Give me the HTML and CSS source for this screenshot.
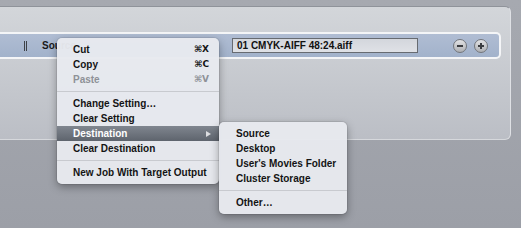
FILE: index.html
```html
<!DOCTYPE html>
<html>
<head>
<meta charset="utf-8">
<link rel="stylesheet" href="styles.css">
</head>
<body>
<div class="screen">
  <div class="panel">
    <div class="row">
      <span class="grip"></span>
      <span class="label">Source</span>
      <span class="field">01 CMYK-AIFF 48:24.aiff</span>
      <span class="btns">
        <span class="circ minus"></span>
        <span class="circ plus"></span>
      </span>
    </div>
  </div>

  <div class="menu main-menu">
    <div class="item"><span>Cut</span><span class="key">⌘X</span></div>
    <div class="item"><span>Copy</span><span class="key">⌘C</span></div>
    <div class="item disabled"><span>Paste</span><span class="key">⌘V</span></div>
    <div class="sep"></div>
    <div class="item"><span>Change Setting…</span></div>
    <div class="item"><span>Clear Setting</span></div>
    <div class="item hl"><span>Destination</span><span class="arrow"></span></div>
    <div class="item"><span>Clear Destination</span></div>
    <div class="sep"></div>
    <div class="item"><span>New Job With Target Output</span></div>
  </div>

  <div class="menu sub-menu">
    <div class="item"><span>Source</span></div>
    <div class="item"><span>Desktop</span></div>
    <div class="item"><span>User's Movies Folder</span></div>
    <div class="item"><span>Cluster Storage</span></div>
    <div class="sep"></div>
    <div class="item"><span>Other…</span></div>
  </div>
</div>
</body>
</html>
```

FILE: styles.css
```css
html, body {
  margin: 0;
  padding: 0;
}

body {
  width: 521px;
  height: 228px;
  overflow: hidden;
  background: linear-gradient(#a6a9b0, #9c9fa7);
  font-family: "Liberation Sans", Arial, "DejaVu Sans", sans-serif;
  font-weight: bold;
  font-size: 10px;
  color: #141414;
}

.screen {
  position: relative;
  width: 521px;
  height: 228px;
  padding-top: 6px;
  box-sizing: border-box;
}

.panel {
  width: 511px;
  height: 134px;
  box-sizing: border-box;
  border-top: 1px solid #8f939a;
  border-right: 1px solid #dfe1e5;
  border-bottom: 1px solid #d6d8dc;
  border-radius: 0 6px 6px 0;
  background: linear-gradient(#d3d6da, #bbbec5);
  padding-top: 25px;
}

.row {
  display: flex;
  align-items: center;
  margin-right: 9px;
  height: 23px;
  border: 2px solid #f4f5f7;
  border-left: none;
  border-radius: 0 5px 5px 0;
  background: linear-gradient(#b0bdd3, #a2b2cb);
  padding-left: 24px;
}

.grip {
  width: 1px;
  height: 10px;
  border-left: 1px solid #3e4247;
  border-right: 1px solid #3e4247;
}

.label {
  margin-left: 15px;
  width: 190px;
  color: #1a1a1a;
}

.field {
  width: 180px;
  height: 13px;
  line-height: 13px;
  border: 1px solid #676b71;
  background: linear-gradient(#d3d6dc, #dfe1e6);
  padding-left: 4px;
  box-sizing: content-box;
  color: #111;
}

.btns {
  display: flex;
  gap: 7px;
  margin-left: 35px;
}

.circ {
  position: relative;
  width: 12px;
  height: 12px;
  border-radius: 50%;
  border: 1px solid #73767b;
  background: linear-gradient(#e2e3e5, #aeb0b4);
}

.circ::before,
.circ::after {
  content: "";
  position: absolute;
  background: #3a3c40;
}

.circ::before {
  left: 3px;
  top: 5px;
  width: 6px;
  height: 2px;
}

.plus::after {
  left: 5px;
  top: 3px;
  width: 2px;
  height: 6px;
}

.menu {
  position: absolute;
  box-sizing: border-box;
  padding: 4px 0;
  background: rgba(231, 233, 238, 0.97);
  border-radius: 5px;
  box-shadow: 0 3px 9px rgba(0, 0, 0, 0.35), 0 0 0 1px rgba(0, 0, 0, 0.07);
}

.main-menu {
  left: 57px;
  top: 38px;
  width: 162px;
}

.sub-menu {
  left: 219px;
  top: 122px;
  width: 128px;
}

.item {
  display: flex;
  justify-content: space-between;
  align-items: center;
  height: 15px;
  line-height: 15px;
  padding: 0 10px 0 16px;
  white-space: nowrap;
}

.sub-menu .item {
  padding-left: 17px;
}

.key {
  font-family: "DejaVu Sans", sans-serif;
  font-size: 9px;
}

.disabled {
  color: #8e9197;
}

.hl {
  background: linear-gradient(#80868f, #5e646d);
  color: #fff;
}

.arrow {
  width: 0;
  height: 0;
  border-left: 5px solid #dcdde0;
  border-top: 3.5px solid transparent;
  border-bottom: 3.5px solid transparent;
  margin-right: -2px;
}

.sep {
  height: 1px;
  margin: 4px 0;
  background: #c8cacf;
}
```
